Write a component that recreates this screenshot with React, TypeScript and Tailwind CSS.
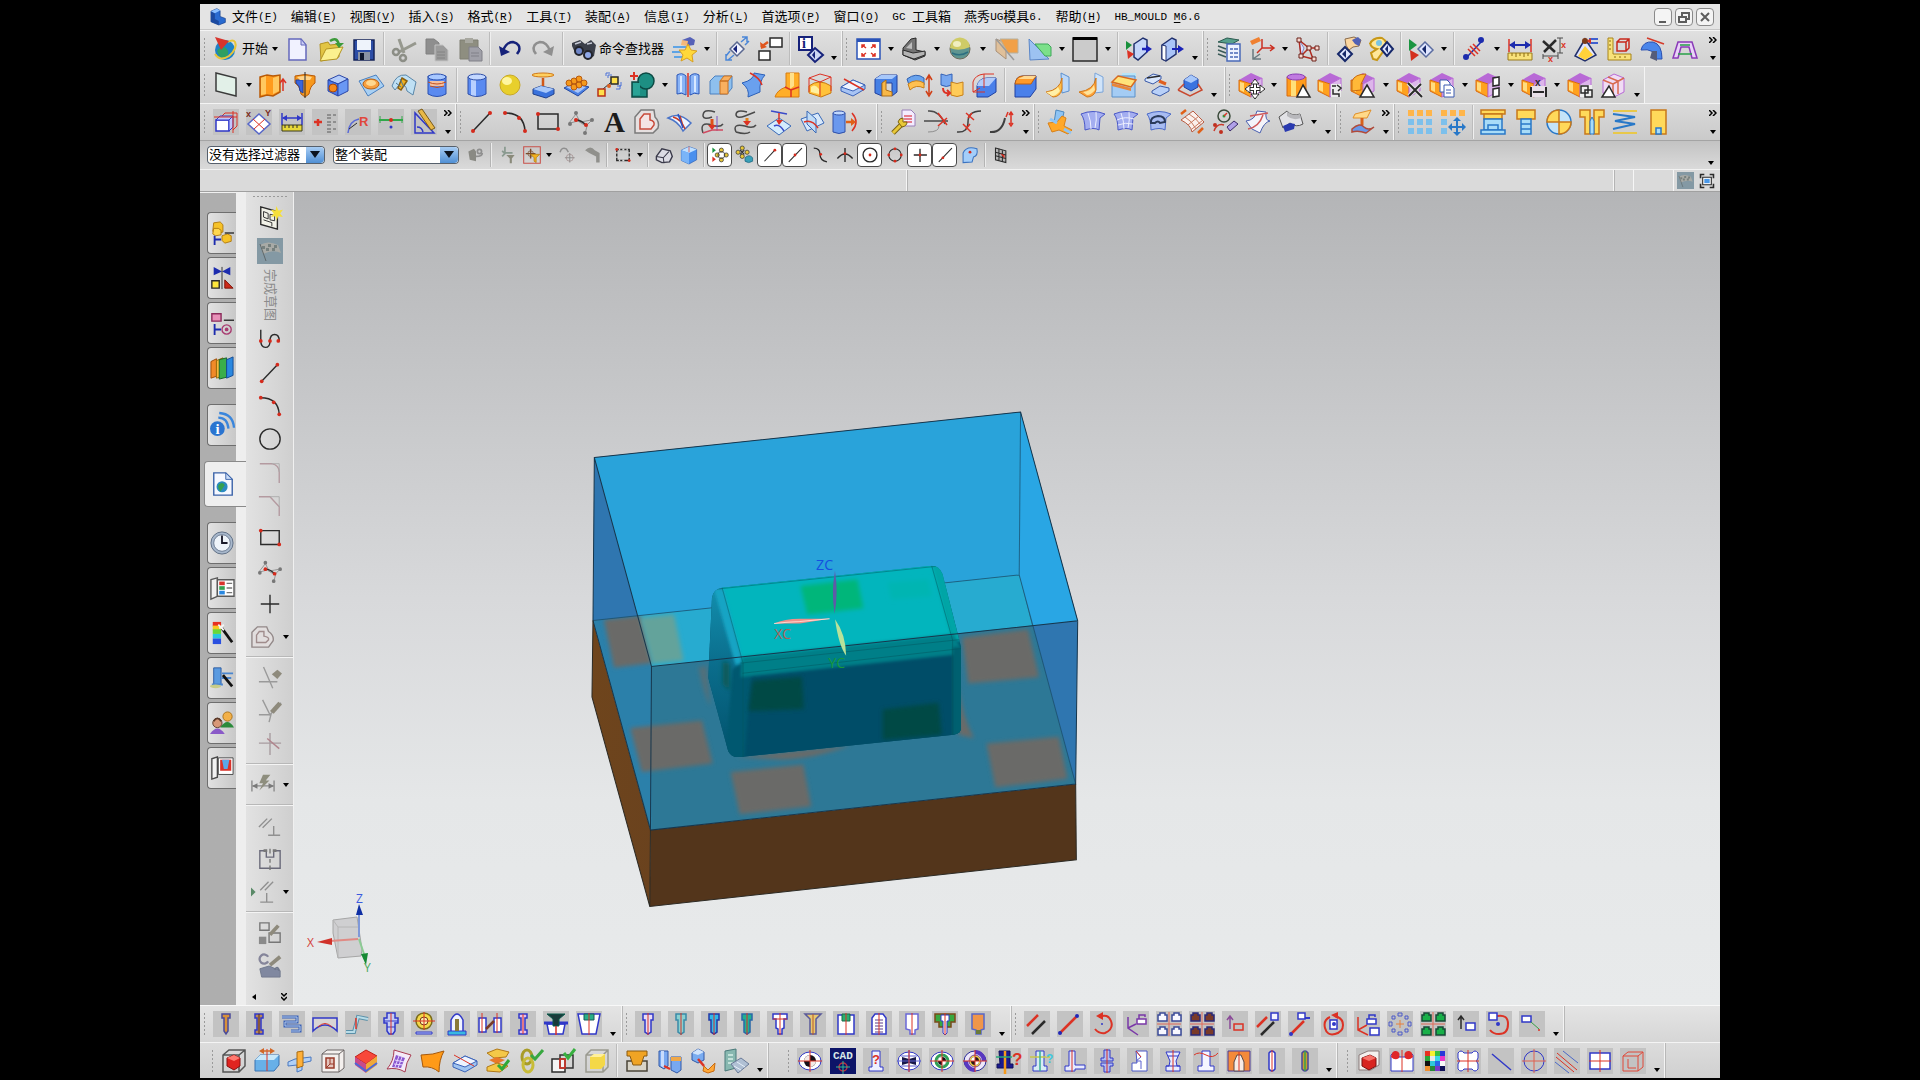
import { Fragment, useState } from 'react';
import clsx from 'clsx';

interface Shape {
    d?: string;
    t?: string;
    x?: number;
    y?: number;
    size?: number;
    font?: string;
    fill?: string;
    stroke?: string;
    w?: number;
}

// shape helpers, every icon is drawn on a 26x26 grid
const f = (d: string, fill: string, stroke = 'none', w = 1): Shape => ({ d, fill, stroke, w });
const s = (d: string, stroke: string, w = 1.5): Shape => ({ d, fill: 'none', stroke, w });
const t = (text: string, x: number, y: number, size: number, fill: string, font = 'Liberation Sans'): Shape => ({ t: text, x, y, size, fill, font });
const c = (x: number, y: number, r: number) => `M${x - r} ${y}a${r} ${r} 0 1 0 ${2 * r} 0a${r} ${r} 0 1 0 ${-2 * r} 0z`;
const e = (x: number, y: number, rx: number, ry: number) => `M${x - rx} ${y}a${rx} ${ry} 0 1 0 ${2 * rx} 0a${rx} ${ry} 0 1 0 ${-2 * rx} 0z`;
const r = (x: number, y: number, w: number, h: number) => `M${x} ${y}h${w}v${h}h${-w}z`;

const K = '#2a2a2a';
const G = '#8f8f8f';
const B = '#3038c8';
const R = '#dc3224';
const W = '#ffffff';
const OR = '#f59a1c';

const dot = (x: number, y: number, color = '#d42a1c') => f(c(x, y, 2), color);
const cube = (top: string, left: string, right: string, line = '#44506a'): Shape[] => [
    f('M3 8L14 3 23 7 13 12z', top, line),
    f('M3 8L13 12V24L3 19z', left, line),
    f('M13 12L23 7V19L13 24z', right, line),
];
const sync: Shape[] = [
    f('M1 8L13 1 24 6 13 12z', '#b869d6'),
    f('M1 8L13 12V25L1 19z', '#ffa21e', '#d86a10'),
    f('M2 10l4 1v9l-4-2z', '#ffdc80'),
    f('M13 12L24 6V19L13 25z', '#dcb6ea', '#b869d6'),
];
const bolt = (fill: string, line = B): Shape[] => [f('M8 3h10v6h-2v12l-3 2-3-2V9H8z', fill, line, 1.5), s('M13 2v22', R, 1)];
const lock = (x: number, y: number, color: string): Shape[] => [s(`M${x + 2} ${y + 5}v-4h6v2`, color), f(r(x, y + 5, 9, 5), W, color, 1.5)];
const quad = (fill: string, line: string): Shape[] => [
    f('M2 10V4h2V2h5v2h2v6zM16 10V4h2V2h5v2h2v6zM2 24v-6h2v-2h5v2h2v6zM16 24v-6h2v-2h5v2h2v6z', fill, line, 1.5),
    s('M13 1v24M1 13h24', '#e06a58', 1),
];

const icons: Record<string, Shape[]> = {
    app: [f('M3 5l9-4 5 3v9l8 3v6l-10 4-12-5z', '#2a6bd0', '#123a86'), f('M3 5l6 3v9l6 3v6L3 21z', '#1c4aa0'), f('M3 5l9-4 5 3-8 4z', '#8cc0ff')],
    start: [f(c(12, 14, 10), '#1d82c8'), f('M4 15q4-6 9-3q5 5-1 11q-6-1-8-8z', '#2f9f62'), s('M2 18q5 8 14 2q9-8 6-14q-2-3-7 0', '#e8c53a', 2), f('M2 1l14 4-8 9z', '#d8342c')],
    new: [f('M4 3h12l5 6v15H4z', '#f1f2ff', '#6468bc', 1.5), f('M16 3v6h5z', '#c9cdf5', '#6468bc')],
    open: [f('M2 8l8-2 2 3 9-1v13L3 25z', '#e2c544', '#b39322'), f('M2 25l6-12 17-2-6 12z', '#fbf08e', '#b39322'), s('M12 5q7-5 9 4', '#3c9a3a', 2.5), f('M17 7h9l-5 5z', '#3c9a3a')],
    save: [f(r(3, 4, 20, 20), '#2c4da6', '#16255a', 1.5), f(r(6, 4, 14, 10), '#eef3fb'), f(r(7, 16, 12, 8), '#8a93a4'), f(r(9, 17, 4, 7), '#10182e')],
    cut: [s('M8 3l5 14M25 7L8 16', '#96988e', 3), s(c(5, 16, 3), '#8c8e86', 2.5), s(c(12, 22, 3), '#8c8e86', 2.5)],
    copy: [f('M2 3h8l5 4v11H2z', '#8e8e8e', '#808080'), f('M11 9h8l5 5v11H11z', '#9b9b9b', '#c4c4c4'), s('M13 16h8M13 19h8M13 22h8', '#828282', 1)],
    paste: [f(r(3, 4, 18, 19), '#8e8e80', '#7e7e72'), f(r(8, 2, 8, 5), '#a8a8a0'), f('M12 11h9l4 4v10H12z', '#a0a0a8', '#808088'), s('M14 17h8M14 20h8', '#808088', 1)],
    undo: [s('M6 15q3-9 10-9q8 2 6 9l-2 3', '#16227a', 2.5), f('M2 10l2 10 9-4z', '#16227a')],
    redo: [s('M20 15q-3-9-10-9q-8 2-6 9l2 3', G, 2.5), f('M24 10l-2 10-9-4z', G)],
    finder: [f('M2 7l8-3 5 4 6-4 5 5-2 11-7 4-3-9-4 3q-5 0-8-8z', '#3b3f4a'), f(c(9, 15, 4), '#6f86c8', '#22242c', 2), f(c(18, 19, 4), '#8fa8e8', '#22242c', 2), s('M5 8l6-2M17 8l5-1', '#c8ccd8')],
    wizard: [f('M11 4l8-3 5 3-1 5-7 1z', '#5561b8'), f('M11 4l6 1-1 5-6-1z', '#f5b87a'), s('M2 11h13M1 16h10M3 21h8', '#5fa4e4', 2), f('M17 8l3 6 6 1-5 4 1 7-6-4-6 3 2-6-4-5 6 0z', '#ffd83a', '#d8a020')],
    updown: [s('M17 6l6-5M18 1h5v5M21 9l4-4M2 18v6h6M6 15l-4 5M4 24l6-5', '#4a86d8', 1.5), f('M6 13l7-7 7 7-7 7z', '#f2f4ff', '#5a6890', 1.5), f('M9 13l4-4v8z', '#16227a')],
    assem: [f(r(13, 2, 12, 9), W, K, 1.5), f(r(2, 15, 11, 9), W, K, 1.5), s('M4 11l7-5', '#e0561e', 2.5), f('M3 6l1 7 6-2z', '#e0561e')],
    info: [f(r(2, 1, 13, 13), W, '#16227a', 2), t('i', 5, 12, 14, '#16227a', 'Liberation Serif'), f('M11 19l7-7 8 7-8 7z', '#cdd6f4', '#16227a', 2), f('M15 19l3-4v8z', '#16227a')],
    fit: [f(r(2, 3, 23, 20), W, '#2a53b8', 1.5), f(r(2, 3, 23, 3), '#2a53b8'), s('M11 12L7 9M7 12V9h3M16 12l4-3M20 12V9h-3M11 17l-4 3M7 17v3h3M16 17l4 3M20 17v3h-3', R, 1.5)],
    shade: [f('M2 12l8-9 5-1v12l9 2v4l-10 4-12-5z', '#737373', K), f('M2 14l10 3 12-2v4l-11 4-11-4z', '#b4b4b4', K), f('M5 12l6-6v7z', '#bdbdbd')],
    sphere2: [f(c(13, 13, 10), '#5f9590', '#6a6a5a'), f('M3 12a10 10 0 0 1 20-1q-11 5-20 1z', '#cfcb66'), f(e(10, 8, 4, 3), '#f1efc0'), s('M5 17q8 4 16-1', '#2d6f80')],
    clipA: [f('M3 3l10 4v16L3 15z', '#e0c09a', '#a89078'), f('M7 3h18v14H15z', '#f2a046', '#b4b0a0'), s('M3 3l18 21', '#9a9a9a')],
    clipB: [f('M3 3l20 20-19 1z', '#9dc2f2', '#5a86c8'), f('M9 8h13l3 3v9h-6z', '#7ce08a', '#3fa85a')],
    blank: [f(r(1, 2, 24, 23), '#cbcbcb', K, 1.5), f(r(1, 1, 24, 3), '#000')],
    sectA: [f('M9 8l9-6 4 2v12l-9 8-4-3z', '#c5d6fa', '#20306e', 1.5), f('M1 5l6 4-6 5z', '#18903c'), f('M2 14l7 4-6 5z', R), s('M17 13h6', '#1a22b8', 2.5), f('M21 9l6 4-6 4z', '#1a22b8')],
    sectB: [f('M4 9l10-7 4 2v14L8 25l-4-2z', '#aac4f8', '#20306e', 1.5), f('M4 9l4 1v15l-4-2z', W, '#20306e'), s('M14 13h8', '#1a22b8', 2), f('M20 9l6 4-6 4z', '#1a22b8')],
    layers: [f('M2 6l9-4 12 2-7 4z', '#57a08c', '#2c5a50'), s('M2 10l8 3M2 14l8 3M2 18l8 3', '#3a5a58', 1.5), f(r(11, 8, 13, 17), '#eef3ff', '#4a6ab8', 1.5), s('M14 13h3M18 13h4M14 17h3M18 17h4M14 21h3M18 21h4', '#4a6ab8')],
    csys: [f('M1 5l9-4 2 4-9 4z', '#f08030'), s('M13 3v9h11M13 12l-5 5M21 9l4 3-4 3', '#cc3022', 1.5), s('M4 13v10h8M4 23l7-5', '#6a7a80', 1.5)],
    drag: [f('M4 4l5 8-3 8z', '#dfe4ff', '#8088c8'), s('M4 4l10 8 8 0M4 4l2 16 12 3M14 12l4 11M6 20l8-8', '#b02a20', 1.5), f(r(2, 2, 4, 4) + r(4, 18, 4, 4) + r(12, 10, 4, 4) + r(20, 10, 4, 4) + r(17, 21, 4, 4), '#f8d8d0', '#6a2018')],
    handA: [f('M10 3l9-2 7 3-2 6-6 1-4 3q-4-4-4-11z', '#fbd6a0', '#8a6a4a'), f('M17 4l6-3 3 3-2 6-4-2z', '#5261b4'), f('M3 18l7-7 7 7-7 7z', '#dfe6ff', '#16286a', 2), f('M7 18l4-4v8z', '#16286a')],
    handB: [f('M2 8q3-7 12-6q7 4 3 11l-8 11-4-1-2-6 6-4q-6-1-7-6z', '#ffe89a', '#c89818', 2), f(c(11, 7, 3), '#7ac4e4'), f('M13 13l6-7 6 7-6 7z', '#dfe6ff', '#16286a', 2), f('M17 13l3-4v8z', '#16286a')],
    show: [f('M1 3l8 6-8 6z', '#1a9440'), f('M2 14l9 5-8 6z', '#d4301e'), f('M10 13l7-7 8 8-7 7z', '#dfe6ff', '#5a6ca0', 1.5), f('M14 13l4-4v9z', '#16286a')],
    measure: [s('M6 21L21 5', '#1c2cae', 1.5), s('M9 10l8 8M7 13l7 7M12 8l7 7', R, 1.5), f(c(5, 21, 3) + c(20, 4, 3), '#1c2cae')],
    ruler: [f(r(1, 17, 24, 7), '#f8e27a', '#9a7a18'), s('M5 17v3M9 17v4M13 17v3M17 17v4M21 17v3', '#8a6a10', 1), s('M2 3v13M24 3v13', R, 1.5), s('M3 9h20', '#1c2cae', 2), f('M2 9l6-4v8zM24 9l-6-4v8z', '#1c2cae')],
    dimX: [s('M3 5l12 11M16 4L4 16', K, 2.5), s('M20 2v15M17 2h6M17 17h6M3 20h15M3 18v5M18 18v5', '#4a4a4a', 1), t('x', 21, 12, 9, R), t('x', 8, 26, 9, R)],
    cone: [f('M12 3L2 20l10 5 11-6z', '#e0e4ff', '#22306a', 1.5), f('M12 10l-7 10 7 4 8-5z', '#ffd23a'), f(c(12, 5, 3), '#7a3a1a'), s('M16 3h9M16 7h9', '#4060d0', 2), f('M14 5l4-3v6z', R)],
    cubeRule: [f('M2 2h5v16h18v6H2z', '#f8e27a', '#a88418'), s('M5 5H3M5 9H3M5 13H3M9 22v-2M14 22v-2M19 22v-2', '#8a6a10', 1), s('M11 6h9v9h-9zM11 6l3-3h9v9l-3 3M20 6l3-3', '#c8281c', 1.5)],
    curve: [f('M2 14q2-9 12-8q9 2 9 17h-6q-1-11-15-9z', '#4a86ea', '#2a50b0'), f('M13 15h5v10l-7-3z', '#555c78'), s('M8 2l17 6', '#d43a2a', 1.5)],
    trap: [f('M6 6h14l5 16h-5l-3-11h-8L6 22H1z', '#ead2f8', '#8a3ab8', 1.5), s('M8 9h10M6 18h14', '#28a048', 1.5)],

    datum: [f('M3 1l20 5v18l-20-5z', '#e2f0e8', '#3a3a3a', 1.5)],
    extrude: [f('M1 5l7-2 6 1 7-1v17l-7 4-6-1-7 2z', '#ff9a1c', '#b85a08', 1.5), f('M2 6l5-2v18l-5 1zM14 6l6-2v15l-6 3z', '#ffc860'), s('M24 19V8M21 11l3-4 3 4', R, 1.5)],
    revolve: [f('M3 4q10-3 20 0v7q-5 3-6 11l-4 3-4-3q-1-8-6-11z', '#f7981c', '#b85a08'), f('M4 8h7v13l-3-2q0-5-4-8z', '#3a66dc', '#2040a0'), f('M5 5q8-2 15 0l-2 3H8z', '#ffd48a'), s('M13 0v26', K, 1)],
    hole: [...cube('#b4ccfa', '#4a78e8', '#6a98f4', '#2a46a8'), f(c(8, 16, 4), '#f58a1c', '#a84808')],
    emboss: [f('M1 9l17-6 8 11-16 10z', '#a8d0f4', '#4a80c0'), f(e(13, 12, 8, 5), '#f8a040', '#b86010'), f(e(13, 11, 5, 3), '#ffd890')],
    rib: [f('M1 14q4-12 14-11l10 7-3 13-6-4q-1-8-8-6l-4 5z', '#bfe0f4', '#5a86a8'), f('M11 6l5 3-6 9-3-2z', '#f0b020', '#8a6010', 1.5), s('M5 11l5 4M9 7l4 8', '#4a7aa0', 1)],
    thread: [f('M4 4h18v18q-9 5-18 0z', '#5a8af0', '#2a50b0'), f(e(13, 5, 9, 3), '#a8c8ff', '#2a50b0'), f('M6 9h14v5H6z', '#f4c0a0'), s('M4 10q9 4 18 0M6 14q7 3 14 0', '#c05020', 1)],
    cylinder: [f('M4 5h18v17q-9 5-18 0z', '#5a8af0', '#3050a8'), f('M7 7h5v17l-5-1z', '#b8d0ff'), f(e(13, 5, 9, 3), '#c4d8ff', '#3050a8')],
    sphere: [f(c(13, 13, 10), '#e8cf2c', '#c8a828'), f(e(10, 9, 5, 4), '#fff6a0')],
    boss: [f('M3 17l8-3 13 3v5l-8 4-13-4z', '#3a72dc', '#20408c'), f('M3 17l8-3 13 3-8 4z', '#a8c8fa'), f(e(13, 3, 11, 2), '#ffd060', '#d07818'), s('M13 6v8', '#d05818', 2.5)],
    pattern: [f('M1 16l10-5 15 4-11 9z', '#4a80e4', '#2448a0'), f('M3 15l9-3 11 3-8 6z', '#a8c4f8'), f(c(6, 11, 3) + c(11, 9, 3) + c(16, 7, 3) + c(11, 15, 3) + c(16, 13, 3) + c(21, 11, 3), OR, '#b85a10')],
    instance: [s('M7 17l12-10', K, 1), f(r(2, 17, 7, 7), '#ffe04a', '#b83018', 1.5), f(r(15, 5, 7, 7), '#ffe04a', K, 1.5), f(c(13, 14, 2), '#e06020'), s('M10 4V1h4M12 6V3h4M25 10v4h-4M24 13v4h-4', '#4a70d8', 1)],
    unite: [f(r(3, 10, 15, 15), '#1d8f83', '#0c4a44', 1.5), f(c(17, 9, 8), '#1d8f83', '#0c4a44', 1.5), f('M4 11h7v12H4z', '#2aa396'), s('M5 0v8M1 4h8', R, 2)],
    split: [f('M2 3q5-3 9 1v19q-4-3-9-1zM24 3q-5-3-9 1v19q4-3 9-1z', '#8ab4f6', '#2a56b8'), s('M13 1v24', R, 1.5), s('M6 4v16M20 4v16', '#d8e8ff', 2)],
    trimBody: [f('M2 9l5-5h17v12l-5 6H2z', '#8ec0ee', '#4a80c0'), f('M12 9h8v13h-8zM12 9l4-5h8l-4 5z', '#f8b060', '#c87020')],
    swept: [f('M1 11q12-3 12-10l11 2q-6 6-5 17l-12 5q2-8-6-14z', '#6aa0ee', '#2c60b8'), s('M9 1q10 5 12 12', R, 1.5)],
    cornerO: [f('M12 1h13v24H1q2-7 11-10z', '#ffae28', '#d87c10'), f('M16 1h4v13l-4 3z', '#ffe08a'), s('M11 15l6 3 8-3M17 18v7', R, 1.5)],
    shell: [f('M2 14q10-8 22 0v7l-10 4-12-4z', '#ffc23a', '#c87810'), f('M4 15q4-4 8 2v5l-8-2z', '#fff0a0'), s('M2 6l11-4 11 3v14M2 6v14M2 6l11 4 11-5M13 10v14', R, 1)],
    slab: [f('M1 15l12-7 12 5v4l-12 7-12-5z', '#a8c4f4', '#3a62b8'), f('M1 15l12-7 12 5-12 6z', '#eef4ff', '#3a62b8'), s('M4 7l20 11', R, 1.5)],
    groove: [f('M2 7l6-4h16v17l-5 4V11H9v13l-7-3z', '#4680e4', '#2040a0'), f('M9 11l4-3v10l6 2v4l-10 0z', '#f8b848', '#b07018'), f('M2 7l6-4h16l-5 4z', '#a8c8fa')],
    bend: [f('M1 7q9-7 17-1v7q-8-5-14 3z', '#6aa4ee', '#3060b0'), f('M2 12q8-6 16-1v5q-8-4-14 2z', '#ffc050', '#c88018'), s('M23 4v18M20 8l3-5 3 5M20 19l3 5 3-5', '#d04018', 1.5)],
    wrap: [f('M2 2q5 3 11 0v11q-6 3-11 0z', '#78a8f0', '#3060b8'), f('M12 10q6 3 12 0v13q-6 3-12 0z', '#ffcb58', '#c88018'), s('M4 16q0 6 6 5M8 18l3 3-3 3', R, 2)],
    sheetR: [f('M5 14q2-8 10-8h9v14l-8 5H5z', '#4a80ea', '#2040a0'), f('M5 14q2-8 10-8h9l-7 8z', '#b4ccfa'), s('M1 20V10Q3 3 12 2h10M1 20l7-4M1 20h12M12 2v14', R, 1)],
    blend: [f('M3 12q1-8 8-8h13v13l-6 8H3z', '#4a80ea', '#2040a0'), f('M3 12q1-8 8-8h13l-5 8z', '#ff9a28', '#c06010'), f('M6 7l6-3h12l-3 3z', '#ffd890')],
    edgeA: [f('M16 1l8 4v14l-7 2z', '#bcd8f8', '#5a90d0'), f('M1 20q14-2 16-14v11q-2 8-9 8z', '#ffc04a', '#d07818'), f('M1 20q8 0 12-5l2 4q-4 5-8 5z', '#fff0a8')],
    edgeB: [f('M17 1l8 4v15l-9 1z', '#d0e4fa', '#7aa4d8'), f('M1 20q15-2 17-14v12q-2 7-9 7z', '#ffa23a', '#d07818'), f('M5 20q8-1 11-7l1 5q-4 5-8 5z', '#ffe49a')],
    chamfer: [f('M11 1h14v8H11z', '#b8e4f8'), f('M1 11l6-7h17v21H1z', '#a4ccf4', '#5a90c8'), f('M1 10l6-6 18 4-5 7z', '#ffe27a', '#d86a20', 1.5), f('M1 11l19 5v3L1 14z', '#e8863a')],
    offsetF: [f('M1 7l8-5 8 2v3l-8 5-8-3z', '#d8e6fc', '#3a5aa8', 1), f('M8 19l8-5 9 2v3l-9 5-8-3z', '#b8d0f8', '#3a5aa8', 1), s('M3 6l13-2', K), s('M15 9l7 3', '#e06020', 3)],
    draft: [f('M7 8l7-5 7 4v8l-7 4-7-4z', '#3a74e0', '#2040a0'), f('M7 8l7-5 7 4-7 4z', '#a8c8fa'), s('M1 18l12 6 12-6-4-6M1 18l6-6', '#c84a30', 1.5)],

    sMove: [...sync, s('M17 9v16M9 17h16', W, 6), s('M17 10v14M10 17h14', K, 4), s('M17 11v12M11 17h12', W, 2), f('M17 7l4 5h-8zM17 27l4-5h-8zM7 17l5-4v8zM27 17l-5-4v8z', W, K)],
    sCyl: [f('M3 5h19v19H3z', '#ff9c1c', '#d86a10'), f('M7 6h5v18H7z', '#ffdf7a'), f(e(12, 5, 9, 3), '#c07ae0', '#8a3ab8'), f('M19 13l7 12H13z', W, K, 1.5)],
    sReplace: [...sync, f('M14 12h10v13H14z', '#ececec'), s('M15 14h4M20 13l4 3-3 3M16 17v5h6v3', K, 1.5)],
    sRound: [...sync, f('M2 9q3-7 14-7l-5 10v6l-9 1z', '#ffb838', '#c86a10'), f('M17 13l7 12H10z', W, K, 1.5)],
    sDelete: [...sync, s('M12 11l14 14M25 12L13 24', '#e4e4e4', 4), s('M12 11l14 14M25 12L13 24', K, 2)],
    sCopy: [...sync, f('M11 8h7l3 3v9H11z', W, '#3a5ab0'), f('M15 13h7l3 3v9H15z', W, '#3a5ab0'), s('M17 18h5M17 21h5', '#3a5ab0', 1)],
    sCopl: [...sync, f('M18 6l6-1v8l-6 1zM18 17l6-1v8l-6 1z', W, K, 1.5)],
    sDim: [...sync, f(r(10, 14, 15, 11), '#e8e0e8'), s('M10 15v10M25 15v10M12 20h11', K, 2), t('x', 14, 14, 10, K)],
    sShell: [...sync, f(r(13, 13, 12, 12), '#f0f0f0'), s('M14 14h7v7h-7zM18 18h7v7h-7z', K, 1.5)],
    sEdit: [f('M3 8L14 2 24 6V20L14 25 3 21z', '#f0dcf4', '#b869d6'), s('M3 8l10 4v12M13 12l11-6M8 5l10 4v13', '#d86a50', 1.5), f('M9 14l6 11H2z', W, K, 1.5)],

    box3: [s('M8 8l4-4h12v13l-4 4', R, 1), f(r(3, 11, 13, 11), W, B, 1.5), f('M3 11l4-4h13l-4 4zM16 11l4-4v11l-4 4z', '#c0c8ff', B), s('M20 2v22M1 8h23', R, 1)],
    plane3: [f('M13 5l11 10-11 10L2 15z', W, '#5868c8', 1.5), s('M7 10l11 10M19 10L8 20', R, 1), t('x', 0, 8, 9, '#7a2a20'), t('Y', 19, 7, 9, '#7a2a20')],
    meas3: [s('M3 4v12M23 4v12M4 9h18', B, 1.5), f('M3 9l5-3v6zM23 9l-5-3v6z', B), f(r(3, 16, 20, 6), '#e8d838', '#3a3a1a'), s('M6 16v3M10 16v3M14 16v3M18 16v3', K, 1)],
    list3: [s('M6 10v7M2 13h8', R, 2.5), s('M15 6h4M15 9h4M21 6h3M15 13h4M15 16h4M21 13h3M15 20h4M15 23h4M21 20h3', '#5a5a5a', 1)],
    radius: [s('M3 24q1-12 11-14', '#5a6ad8', 1.5), s('M12 14L4 20', K, 1), t('R', 14, 17, 13, '#e0483c')],
    level: [s('M1 11h24', '#30a848', 2), s('M2 7v7M24 7v7', '#30a848', 1), dot(13, 11), f(c(13, 18, 1.5), B)],
    angle: [s('M4 24V4l19 20z', B, 1.5), f('M7 2l4-2 13 19-4 2z', '#e8b848', '#7a5a18'), s('M6 18q5 0 6 5', B)],
    line: [s('M4 22L21 4', K), dot(4, 22), dot(21, 4)],
    arc: [s('M3 4q19 0 20 18', K), dot(3, 4), dot(17, 9), dot(23, 22)],
    rect: [s(r(3, 5, 20, 15), K), dot(3, 5), dot(23, 20)],
    spline: [s('M1 14l7-9 4 8 6-1 5-1M2 14l8-2 8 5 6-6M17 25l2-8', G, 1), s('M8 11q5 0 10 5', K), dot(8, 11), dot(18, 16), f(c(8, 4, 2) + c(2, 15, 2) + c(24, 11, 2) + c(17, 24, 2), '#777')],
    text: [t('A', 3, 23, 29, '#1c1c1c', 'Liberation Serif')],
    offset: [f('M1 24V8l6-7h13l1 7q5 5 3 11l-5 5z', '#e6e0e0', '#7a7a7a', 1.5), f('M6 20V10l4-5h6v6q5 1 4 5l-3 4z', '#f4e4e4', '#c84a3a', 1.5)],
    faceCurve: [f('M1 9q11-7 23 5l-8 8Q11 12 1 9z', '#eef4ff', '#4a74c8', 1.5), s('M6 8q8 2 12 12M13 7l3 10', '#cc3a20', 1.5), s('M11 5l5 14', '#2a50c0', 1.5)],
    bridge: [s('M15 3q-12-4-12 4q1 4 9 1M3 24q-4-12 9-8q8 3 11-1', '#4a4a4a', 1.5), s('M17 7v15', '#7a50c0', 1), s('M12 10v6', '#e05018', 3), f('M8 16h8l-4 5z', R), s('M3 24l9-3 11 0', '#d04a60', 1.5)],
    bridge2: [s('M14 3q-11-3-11 3q1 4 9 1l10-4M3 23q-4-9 9-6q8 3 11-1M3 23q10 3 14 0', '#4a4a4a', 1.5), s('M14 9v5', '#e08018', 3), f('M10 12h8l-4 5z', R)],
    project: [f('M1 17l12-8 12 8-12 9z', '#d4ecfc', '#3a6ab8', 1), s('M5 2l16 3M8 17q5-3 10 5', '#3a4ac8', 1.5), s('M13 4v9', R, 1.5), f('M10 11h7l-4 5z', R)],
    intersect: [f('M2 10l17-6 6 10-17 8z', '#d8e8fa', '#3a6ab8', 1), f('M8 2l9 8v14l-9-9z', '#c0dcf6', '#3a6ab8', 1), s('M5 13q8-3 14 6', R, 1.5)],
    combine: [f('M1 4h12v19q-6 3-12 0z', '#6a98ee', '#3050a8'), f(e(7, 4, 6, 2), '#c0d8ff', '#3050a8'), s('M20 4q8 9 0 18', R, 1.5), s('M14 13h6', '#e06018', 2.5), f('M19 9l5 4-5 4z', '#e06018')],
    wrench: [f('M12 1h9l4 4v12H12z', '#f4ecff', '#9a80b8'), s('M14 7h8M14 10h8M14 13h8', '#e05a6a'), s('M3 24l9-9', '#7a6210', 5), s('M3 24l9-9', '#e8c838', 3), f('M8 13q1-4 5-4v4h4q0 4-5 5z', '#e8c838', '#7a6210')],
    trimC: [s('M1 12h24M5 2q11-1 17 13', '#4a4a4a', 1.5), s('M15 4l9 12M24 9l-9 8', R, 1.5), s('M5 23q11 0 11-6', G, 1)],
    divide: [s('M1 23q11 1 11-10T25 2', '#3f3f3f', 1.5), s('M10 4l8 7M7 15l8 8M16 4l-4 5M14 15l-4 5', R, 1.5)],
    length: [s('M1 23q12 1 15-14', '#3f3f3f', 2), s('M17 8l2-5M22 15V4M20 6l2-3 2 3M20 14l2 3 2-3', R, 1.5)],
    ruled: [f('M9 1l8 2-3 13-7-2z', '#8ec4f4', '#4a88c0'), f('M1 14l9-1 5-6 4 2-2 8 8 4-4 4-9-4-7 2z', '#ffa828', '#d88018'), s('M3 10l7 4M17 20l7 4', '#8ec4f4', 3)],
    mesh1: [f('M1 5q12-5 24 0l-5 4-1 12q-5-3-14 0 0-11-4-16z', '#a4aef0', '#4a58c8'), s('M8 4q3 8 3 16M16 3q1 8-1 16', '#eef0ff', 1)],
    mesh2: [f('M1 5q12-5 24 0l-5 4-1 12q-5-3-14 0 0-11-4-16z', '#a4aef0', '#4a58c8'), s('M8 4q3 8 3 16M16 3q1 8-1 16M4 11q8-4 17-1M5 16q7-3 15-1', '#eef0ff', 1)],
    mesh3: [f('M1 5q12-5 24 0l-5 4-1 12q-5-3-14 0 0-11-4-16z', '#a8bcf2', '#4a6ac8'), s('M5 14q-1-6 7-7 7 0 7 6l-5 1q-2-3-5 0z', '#2a3a5a', 2)],
    mesh4: [f('M2 11l12-9 11 11-12 10q-1-7-11-12z', '#faf0ec', '#b85a40'), s('M6 8q7 4 11 12M10 5q7 4 12 11M9 16l11-9M13 20l11-9', '#c87a60', 1), s('M2 5l5-4M19 24l5-5', '#e06018', 2.5)],
    studio: [s(c(12, 7, 6), '#3a4a3a', 1.5), f(c(12, 7, 1.5), '#28a040'), s('M12 7l3-3', R), s('M2 22q3-8 10-6', '#cc3a2a', 1.5), f('M15 18l7-6 4 3-8 7z', '#b0a0e8', '#3a2a6a'), f(c(3, 16, 2) + c(9, 23, 2), '#c03020')],
    trimS: [f('M1 12q9-1 11-10l9 1q-1 9 4 9-6 1-10 12l-8-4z', '#f4f4fa', '#4a60b0'), s('M3 20q11-2 15-14M5 7l18-3', '#d05a5a', 1.5)],
    surf: [f('M1 8l8-6q5 6 13 3l3 10q-7 4-13-1l-7 5z', '#e2e2e6', '#555'), f('M9 2q5 6 13 3l1 4q-8 3-14-2z', '#b8b8bc'), f('M5 17l7-3 5 1-1 5-9 3z', '#2a3ab0')],
    morph: [f('M6 5l16-4-4 8-14 0z', '#ffd98a', '#e0902a'), s('M13 9v7', '#d8601a', 3), f('M3 20q8-7 12-2 4 4 10 0l-8 6q-8-3-14-1z', '#6a98e8', '#b04a3a', 1.5)],
    grid: [f(r(1, 1, 6, 6) + r(10, 1, 6, 6) + r(19, 1, 6, 6), '#ffb54a'), f(r(1, 10, 6, 6) + r(10, 10, 6, 6) + r(19, 10, 6, 6) + r(1, 19, 6, 6) + r(10, 19, 6, 6) + r(19, 19, 6, 6), '#7cc0ec')],
    gridMove: [f(r(1, 1, 6, 6) + r(10, 1, 6, 6) + r(19, 1, 6, 6), '#ffb54a'), f(r(1, 10, 6, 6) + r(1, 19, 6, 6), '#7cc0ec'), s('M17 11v14M10 18h14', '#2878c8', 2), f('M17 8l4 4h-8zM17 27l4-4h-8zM8 18l4-4v8zM26 18l-4-4v8z', '#2878c8')],
    mold1: [f('M1 1h24v4H1z', '#ffd95a', '#c8781a', 1.5), f(r(4, 5, 18, 5), '#ffd95a', '#c8781a', 1.5), f(r(4, 10, 18, 11), '#a8dcf8', '#2878c8', 1.5), f(r(1, 21, 24, 4), '#a8dcf8', '#2878c8', 1.5), s('M8 21v-5h10v5', '#2878c8')],
    mold2: [f('M4 1h18v9H4z', '#ffd95a', '#c8781a', 1.5), f('M8 10h10v15H8z', '#a8dcf8', '#2878c8', 1.5), s('M8 15h10M8 20h10', '#2878c8')],
    mold3: [f(c(13, 13, 12), '#c4e4f8', '#2878c8', 1.5), f('M13 1v12H1A12 12 0 0 1 13 1zM13 25V13h12a12 12 0 0 1-12 12z', '#ffd95a', '#c8781a', 1.5)],
    mold4: [f('M1 1h10v24H6V8H1z', '#ffd95a', '#c8781a', 1.5), f('M25 1H15v24h5V8h5z', '#ffd95a', '#c8781a', 1.5), f('M11 12l2-4 2 4v13h-4z', '#a8dcf8', '#2878c8')],
    mold5: [f(r(1, 1, 24, 2), '#e8c84a'), f(r(1, 23, 24, 2), '#e8c84a'), s('M1 5l22 3L3 12l20 3L1 20', '#2878c8', 2)],
    mold6: [f('M6 1h15v24H6z', '#ffd95a', '#c8781a', 1.5), f('M11 25v-6h5v6z', '#a8dcf8', '#2878c8', 1.5)],

    fInt: [f('M2 8l8-4 3 4v14l-9-2z', '#8a8a84'), s(c(18, 8, 3), G, 2.5), s('M13 15q9 0 9-5', G, 2.5)],
    fBack: [s('M10 1v9h11M6 7l4 4-4 4', '#8a9a90', 2.5), f('M12 13h12l-4 5v7h-3v-7z', '#8a8a7a')],
    fSnap: [s(r(1, 1, 24, 24), '#c8504a', 1.5), s('M11 4v14M4 11h14', '#7a4a2a', 2), s(c(11, 11, 4), '#7a4a2a', 1), f('M11 12h13l-5 5v7l-3-2v-5z', '#f2b01e', '#b07808')],
    fDes: [s('M3 9q2-8 9-5l3 5', G, 2), s('M17 10v14M10 17h14', G, 1.5), s(c(17, 17, 5), '#a08a8a', 1)],
    fHand: [f('M3 6q8-8 14 0l7 4v14h-5v-9L9 10z', '#90908c')],
    fRect: [s(r(4, 5, 18, 16), K, 2), s('M7 5h2M12 5h3M18 5h2M7 21h2M12 21h3M4 9v2M4 15v2M22 9v2M22 15v2', '#d8d8d8', 3), dot(4, 5), dot(22, 21)],
    fHouse: [f('M2 15l8-11 12 3 3 8-4 8-11 1-8-4z', '#dcdce4', '#3a3a4a', 2), s('M2 15l10 2 1 8M12 17l8-9', '#3a3a4a', 1.5)],
    fCube: [f('M2 6l11-5 11 4v15l-11 6L2 21z', '#4a90ee', '#2a60b8'), f('M2 6l11-5 11 4-11 5z', '#c0e0ff'), f('M13 10v16L2 21V6z', '#7ab4f8'), s('M13 1v8', R, 1)],
    fEnds: [f('M2 2l5 4-5 4z', '#1a9440'), f('M2 15l5 4-5 4z', R), f(c(15, 6, 3) + c(15, 20, 3) + c(9, 13, 3) + c(22, 13, 3), '#e8c838', K), s(c(15, 13, 5), K, 1)],
    fNodes: [f(c(9, 3, 3) + c(9, 15, 3) + c(3, 9, 3) + c(16, 9, 3), '#e8c838', K), s('M6 6l6 6M12 6l-6 6', K), f('M13 17q6-6 11 0v5q-6 4-11 0z', '#38a0b8', '#18607a')],
    fEnd: [s('M5 22L20 6', K), dot(20, 6)],
    fMid: [s('M4 23L23 3', K), dot(13, 13)],
    fTan: [s('M4 3q9 0 9 9t10 11', K, 2), dot(14, 12)],
    fInter: [s('M2 18q11-13 22 0M13 3v20', K, 2), dot(13, 11)],
    fCenter: [s(c(13, 13, 10), K, 2), dot(13, 13)],
    fQuad: [s(c(13, 13, 9), K, 1.5), dot(13, 4), dot(13, 22), dot(4, 13), dot(22, 13)],
    fPoint: [s('M13 4v19M4 13h19', K, 2), dot(13, 13)],
    fOn: [s('M4 23L23 3', K), dot(10, 17)],
    fFace: [f('M3 10q5-11 20-6 2 10-5 12l-2 7-13 1z', '#a4cefa', '#3a72c0', 1.5), dot(13, 9)],
    fGrid: [f('M5 3l15 4v17L5 20z', '#b4b4b4', K, 1.5), s('M10 4v17M15 6v17M5 9l15 4M5 14l15 4', K, 1.5), f('M12 11l6 2v5z', R)],
    flag: [f(r(0, 0, 26, 26), '#8499a4'), f('M3 7q8-5 18 0l3 8q-8-4-18 1z', '#a8aaa6'), s('M3 6l6 17', '#5f686a', 1), f('M5 8h3v3H5zM11 6h3v3h-3zM17 7h3v3h-3zM9 10h3v3H9zM15 10h3v3h-3z', '#76807e')],
    window: [s('M1 8V1h7M18 1h7v7M25 18v7h-7M8 25H1v-7', K, 3), f(r(5, 6, 16, 14), W, K, 2), f(r(8, 9, 10, 8), '#4a98e8')],

    assyNav: [f('M4 2l7-1 3 3v8l-8 2-3-3z', '#f6c228', '#b07a10'), f('M13 16l6-2 4 2v6l-7 2-3-3z', '#f6c228', '#b07a10'), f('M4 8l5 0 3 2v5l-6 1-3-2z', '#ffd850', '#b07a10'), s('M5 16v10M5 20h7', '#1c2cae', 2), s('M16 13h10', K)],
    constraint: [f('M4 1v9l9-4zM22 1v9l-9-4z', '#1c2cae'), f(r(2, 16, 8, 8), '#ffe83a', K, 1.5), f('M16 24v-9l9 9z', '#cc2a1a', '#7a1408'), s('M13 1v24', K, 1)],
    partNav: [f('M2 3h10v8H2z', '#e890b8', '#8a2a5a', 1.5), s('M5 14v12M5 20h7', '#1c2cae', 2), s('M15 10h11', K), s(c(18, 20, 5), '#a83a70', 1.5), f(c(18, 20, 2), '#a83a70')],
    library: [f('M1 6l6-3v19l-6 2z', '#f08a28', '#9a4a08'), f('M7 5l7-3v20l-7 2z', '#f8b83a', '#9a6a08'), f('M10 4l8-2v21l-8 2z', '#3aae4a', '#14602a'), f('M18 4l7-3v20l-7 3z', '#2a88e0', '#144a90')],
    webInfo: [f(c(8, 17, 8), '#2a74d0'), t('i', 6, 23, 16, W, 'Liberation Serif'), s('M9 5q10 0 11 12M10 0q15 1 16 16', '#3a86dc', 2.5)],
    browser: [f('M3 1h13l7 7v17H3z', '#f6f8ff', '#3a62a8', 1.5), f('M16 1v7h7z', '#cadcf8', '#3a62a8'), f(c(12, 16, 6), '#2a8ac0'), f('M8 14q4-4 7 0-3 5-5 7-3-4-2-7z', '#34a050')],
    clock: [f(c(13, 13, 12), '#a8b8cc', '#5a6a80'), f(c(13, 13, 9), '#eef4fa', '#6a7a90'), s('M13 5v8h6', '#1a1a2a', 2)],
    roles: [f('M1 4l7-2v20l-7 3z', '#f0f0f0', '#5a5a5a', 1.5), f(r(8, 4, 18, 18), W, '#5a5a5a', 1.5), f(r(10, 6, 6, 4), '#d8342c'), f(r(10, 11, 6, 4), '#34a050'), f(r(10, 16, 6, 4), '#2a88e0'), s('M18 8h6M18 13h6M18 18h6', '#777')],
    rainbow: [f(r(3, 1, 9, 5), '#e83020'), f(r(3, 5, 9, 5), '#f8c820'), f(r(3, 9, 9, 5), '#68d838'), f(r(3, 14, 9, 5), '#28c8e0'), f(r(3, 19, 9, 6), '#2a50e0'), s('M13 8l11 15', '#111', 3), s('M9 4l6 6M15 4l-5 4', '#f4f4f4', 2)],
    wizard2: [f(r(4, 2, 8, 18), '#5a9ae0', '#2a5aa0'), s('M13 8h12M13 13h10M2 20h12', '#4a86d0', 2), s('M14 10l10 12', '#111', 3), f(e(6, 22, 6, 2), '#c8cc88')],
    people: [f(c(19, 6, 5), '#f2b048', '#a87018'), f('M11 18q8-12 15 0z', '#2a8a3a'), f(c(8, 13, 5), '#d89878', '#5a3a2a'), f('M0 25q8-12 16 0z', '#8a5ac8'), s('M4 11q4-6 8 0', '#5a3a2a', 2)],
    gallery: [f('M2 3l6-2v22l-6 2z', '#f2f2f2', '#4a4a4a', 1.5), f(r(9, 2, 16, 18), W, '#444'), f('M11 4h12v12H11z', '#d8342c'), f('M13 4h8l-2 10h-4z', '#5aa8e8')],

    sketch: [f('M3 1l18 5v19L3 20z', '#f2f2e8', K, 1.5), s('M6 6l5 2v6l-5-2zM13 9l5 1v6l-5-1zM6 15l9 3v4', K, 1), f('M20 0l2 5 5-1-3 4 3 4-5-1-2 5-1-5-5 1 3-4-3-4 5 1z', '#f6e03a')],
    profile: [s('M3 2v11q0 8 5 8t5-7q0-7 5-7t5 7', K, 1.5), dot(3, 14), dot(13, 14), dot(22, 14)],
    circle: [s(c(13, 13, 11), K)],
    fillet: [s('M2 4h13q8 2 8 9v12', '#b49aa0', 1.5), s('M15 4h8v9', '#aaa', 1)],
    chamf2: [s('M1 4h12l10 11v10', '#b49aa0', 1.5), s('M13 4h10v11', '#aaa', 1)],
    plus: [s('M13 3v20M3 13h20', K)],
    offGray: [f('M1 24V8l6-6h10l2 5q6 4 5 10l-5 7z', '#e2dede', '#928888', 1.5), s('M6 19v-8l3-4h5v5q6 1 5 4l-3 3z', '#a08c8c', 1.5)],
    qTrim: [s('M6 1l10 23M1 17h20', '#9a9a9a', 1.5), f('M15 9l6-5 5 4-5 6z', '#8e8a7c')],
    qExt: [s('M5 1l8 16 12-13M1 17h13l-2 8', '#9a9a9a', 1.5), f('M13 13l9-10 4 3-9 10z', '#8e8a7c')],
    qCorner: [s('M13 1v24M1 12h24', '#a89ca0', 1.5), s('M10 7l13 11', '#b0848c', 1.5)],
    rapid: [s('M1 8v12M25 8v12M2 14h22', '#8a8a8a', 1.5), f('M1 14l6-3v6zM25 14l-6-3v6z', '#7a7a7a'), f('M13 2h8l-5 6 4 0-11 11 4-8h-4z', '#8e8e7e')],
    geoCon: [s('M1 14l9-9M5 15l10-10M17 13v10M11 23h13', '#909090', 1.5)],
    symm: [s('M9 4H2v19h22V4h-7M9 5v6h8V5', '#6a6a7a', 1.5), s('M13 2v5M13 13v4M13 20v5', '#777', 1.5), s('M6 4l4 0M16 4h4', '#777', 3)],
    autoCon: [f('M0 8l5 5-5 5z', '#5a8a68'), s('M10 11l9-9M15 11l9-9M17 14v10M10 24h14', '#909090', 1.5)],
    attach: [s(r(2, 2, 10, 8), '#777', 1.5), s(r(12, 13, 12, 10), '#777', 1.5), f(r(1, 17, 8, 8), '#8a8a8a'), s('M13 15l9-10', '#8e8a7c', 4)],
    reattach: [s('M11 8a5 5 0 1 1 0-5', '#85859a', 2.5), s('M13 12l11-9', '#8e8a7c', 4), f('M2 16l10-3 7 3 5 2v7H4z', '#8088a0', '#70788c'), s('M18 17q3-5 5 1', '#70788c', 2)],

    b1: [f('M9 3h8v4h-2v13l-2 3-2-3V7H9z', '#d8903a', '#4a4a9a', 1.5)],
    b2: [f('M9 3h8v4h-2v12h2v4H9v-4h2V7H9z', '#b88858', B, 1.5), s('M13 3v20', '#5a2a1a', 1)],
    b3: [s('M3 6h15v5H6v4h15v5h-9', '#3a62b8', 3), s('M3 6h15v5H6v4h15v5h-9', '#b8cce8', 1)],
    b4: [f('M1 7h24v13q-12-12-24 0z', '#d8d4d4', B, 1.5), s('M6 16q7-7 14 0', R, 1)],
    b5: [s('M1 21h8L13 6l10 2', '#5a90a8', 4), s('M1 21h8L13 6l10 2', '#b8dce8', 2), s('M11 7v11', R, 1.5)],
    b6: [f('M9 2h8v5h3v5h-3v8l-2 3h-4l-2-3v-8H6V7h3z', '#c4ccf6', B, 1.5), s('M6 10h14M9 16h8', B, 1), s('M13 2v22', R, 1)],
    b7: [f(c(13, 10, 8), '#f4d848', '#7a6a18', 1.5), f(c(13, 10, 4), '#f8f0b0', '#7a3a18'), s('M2 10h22M13 1v18', R, 1), f('M5 21h16v2H5z', '#b8c4f4', B)],
    b8: [f('M7 21V9q6-12 12 0v12z', '#f0f4ff', B, 1.5), f(r(4, 20, 18, 4), '#38b8e0', B), f(r(11, 8, 4, 12), '#8a7a38')],
    b9: [f('M2 7h7v14H2zM17 7h7v14h-7z', W, B, 1.5), s('M9 18l8-8', '#7a3a28', 2.5), s('M5 2v20M20 2v20', R, 1)],
    b10: [f('M9 3h8v4h-2v12h2v4H9v-4h2V7H9z', '#e8c0e8', B, 1.5), s('M13 3v20', R, 1)],
    b11: [f('M4 13h18l-2 10H6z', W, B, 1.5), s('M1 12h24', B, 3), f('M4 3h18l-6 5v7h-6V8z', '#1a3a3a', '#0a5a4a'), s('M13 15v9', R)],
    b12: [f('M2 3h22l-4 20H6z', W, B, 1.5), f(r(8, 3, 10, 6), '#28b088', '#185a58'), s('M13 2v22', R, 1)],
    s1: bolt('#e8dcf4', B),
    s2: bolt('#8ad0d0', '#3a8aa8'),
    s3: bolt('#30b8e8', '#2038a8'),
    s4: bolt('#20b090', '#2868a8'),
    s5: [f('M6 3h14v5h-3v9l-2 1v5h-4v-5l-2-1V8H6z', W, B, 1.5), s('M13 2v22M6 8h14', R, 1)],
    s6: [f('M5 3h16l-5 5v15h-6V8z', '#e8c870', '#5a5a9a', 1.5), s('M13 3v21', '#b85a28', 1)],
    s7: [f(r(5, 4, 16, 19), W, B, 1.5), f(r(9, 3, 8, 7), '#28b070', '#186848'), s('M13 2v22', R, 1)],
    s8: [f('M6 7l3-4h8l3 4v16H6z', W, B, 1.5), s('M9 9h8M9 12h8M9 15h8M9 18h8M9 21h8', '#5a3a8a', 1), s('M13 2v22', R, 1)],
    s9: [f('M7 3h12v15l-3 1v4h-5v-4l-4-1z', W, '#6a68d8', 1.5), s('M13 2v22', R, 1)],
    s10: [f('M3 3h20v8h-4v5H7v-5H3z', '#38a840', '#7a4a18', 1.5), f('M9 4h8v6h-2v12l-2 2-2-2V10H9z', W, B), s('M13 2v22', R, 1)],
    s11: [f('M7 3h12v15l-3 1v4h-5v-4l-4-1z', '#f0964a', '#5868c8', 1.5), f(r(11, 19, 5, 4), '#6a7a3a')],
    m1: [s('M3 15L14 4', R, 2.5), s('M8 23l13-13', K, 2.5)],
    m2: [s('M3 22L19 6', R, 2.5), f(c(3, 22, 2) + c(20, 5, 2), '#2028b8')],
    m3: [s('M9 6q9-4 12 4t-6 12q-6 1-10-4', R, 2), f('M6 5l7-4v8z', R), f(c(12, 13, 1), B)],
    m4: [s('M5 6v11l10 7M5 17l8-4', '#7a38a8', 1.5), ...lock(14, 3, '#7a38a8')],
    m5: quad('#f8f8ff', '#3a4a98'),
    m6: quad('#7a3a28', '#2a2a78'),
    m7: [s('M8 18V6M5 9l3-4 3 4', '#8a4a98', 1.5), s(r(12, 13, 9, 6), R, 1.5)],
    m8: [s('M2 16L12 6', R, 2.5), s('M6 24l13-13', K, 2.5), f(r(16, 2, 7, 7), '#f4f4ff', B, 1.5)],
    m9: [s('M3 23L16 10', R, 2.5), f(c(3, 23, 2), B), f(r(10, 2, 7, 6), W, B, 1.5), s('M17 7h5', B, 2)],
    m10: [s('M9 6q-7 3-5 11t10 6q8-2 8-9T14 5', R, 2), f('M10 4l7-3v7z', R), f(r(9, 9, 7, 9), W, B, 1.5), dot(13, 13, B)],
    m11: [s('M4 6v13l10 5M4 19l9-5', R, 1.5), ...lock(13, 3, B), f(r(16, 17, 9, 7), W, B, 1.5)],
    m12: [s(r(11, 2, 4, 3) + r(11, 21, 4, 3) + r(2, 11, 3, 4) + r(21, 11, 3, 4) + r(5, 5, 3, 3) + r(18, 5, 3, 3) + r(5, 18, 3, 3) + r(18, 18, 3, 3), '#4a58c8', 1), s('M13 9v8M9 13h8', '#e8803a', 1)],
    m13: quad('#18b048', '#184a38'),
    m14: [s('M8 18V6M5 9l3-4 3 4', K, 1.5), f(r(13, 12, 9, 7), W, B, 1.5)],
    m15: [s('M11 5q11-2 11 8t-9 10q-6 0-9-4', R, 2), f(r(3, 2, 8, 7), W, B, 1.5), dot(12, 13, B)],
    m16: [f(r(3, 5, 9, 6), W, B, 1.5), s('M12 11l8 7', '#38a048', 1), f(c(20, 19, 1), R)],

    p1: [s('M2 7l6-5h16v16l-6 6H2zM2 7h16v17M18 7l6-5', '#555', 1.5), f('M6 10l7-3 6 3v8l-6 4-7-4z', '#e02420', '#8a1010'), f('M6 10l7-3 6 3-6 3z', '#ff7a70')],
    p2: [f('M1 12l5-5h19v10l-5 6H1z', '#68b0e8', '#3a72b0'), f('M1 12l5-5h19l-5 5z', '#c8e8fa'), s('M13 1v22', R, 1), s('M7 3h12', '#d06828', 1.5), f('M5 3l5-3v6zM21 3l-5-3v6z', '#d06828')],
    p3: [f('M1 14l7-3 16-2v4l-9 2v7l-5 2v-7l-9 1z', '#b0d0f6', '#4a78c0'), f('M10 4l6-1v15l-6 2z', '#ffb038', '#a86a10')],
    p4: [f('M2 6l5-4h17v18l-5 4H2z', '#f4f0ee', '#6a6464', 1), s('M2 6h17v18M19 6l5-4', '#6a6464', 1), f(r(6, 10, 8, 10), '#e4c4bc', '#9a3a2a', 1.5), s('M6 20l4-4v-6M10 16h4', '#9a3a2a', 1)],
    p5: [f('M2 9l11-7 11 6-11 8z', '#f8483a', '#c02018'), f('M2 9l11 7v9L2 17z', '#c84a8a'), f('M13 16l11-8v9l-11 8z', '#f0a838'), s('M2 15l11 8 11-8', '#4a68d8', 2)],
    p6: [f('M8 2l17 5q-5 7-6 17-8-5-18-3 7-8 7-19z', '#f4eaf8', '#a83a50', 1), f('M10 7l9 3-4 10-9-1z', '#8a58d0'), s('M13 8l-4 11M16 9l-4 11M9 12l9 2M8 16l9 1', '#e8d8ff', 1)],
    p7: [f('M2 7q12 0 23-4-5 9-5 21-7-6-16-5-1-6-2-12z', '#ff9a18', '#a85808')],
    p8: [f('M1 15l12-7 12 5v4l-12 7-12-5z', '#a0c4f0', '#3a62b8'), f('M1 15l12-7 12 5-12 6z', '#eef4ff', '#3a62b8'), s('M2 7l20 11', R, 1)],
    p9: [f('M2 5l10-4 12 3-3 5-12 1z', '#f4c848', '#b07818'), f('M4 12l8-3 8 3-8 4z', '#e8782a'), f('M2 19l10-4 11 3-8 6-13-1z', '#f4c848', '#b07818'), s('M13 17l4 4 7-9', '#30a838', 3)],
    p10: [s(e(9, 9, 5, 7), '#a89c28', 3), s(e(10, 17, 5, 7), '#c8bc38', 3), s('M13 7l4 4 8-9', '#38a840', 3)],
    p11: [f(r(1, 11, 13, 13), '#f4f4f4', K, 1.5), f(r(9, 7, 13, 13), 'none', '#333', 1.5), s(r(9, 11, 5, 9), R, 1.5), s('M13 5l4 5 7-9', '#38b040', 3)],
    p12: [s('M2 7l5-5h17v17l-5 5H2zM2 7h17v17M19 7l5-5', '#9a9a90', 1.5), f('M6 9l4-3h11v11l-4 4H6z', '#f4d848'), f('M6 9l4-3h11l-4 3z', '#fff09a')],
    p13: [f('M3 13h20v10H3z', '#d8d4c8', '#4a4438', 1.5), f('M3 3h20v5h-3l-3 9H9L6 8H3z', '#f0a424', '#8a5a10', 1)],
    p14: [f('M2 3h9v15l-4 3-5-3z', '#78a8f0', '#3058a8'), f('M4 3h3v17l-3-2z', '#c8dcfc'), f('M14 9h10v13l-4 3-6-3z', '#78a8f0', '#3058a8'), f('M14 9h10v4H14z', '#f0a848'), s('M7 18l6 3', R, 2)],
    p15: [f('M2 5l6-4 6 3v8l-6 3-6-3z', '#7aacf0', '#3058a8'), f('M2 5l6-4 6 3-6 3z', '#d0e4fc'), f('M14 18l4 4 7-7-1 8-6 2-5-2z', '#ffa838', '#c86a10'), s('M8 11l6 7', R, 2.5)],
    p16: [f('M2 3l11-2v19l-11 3z', '#88b8b0', '#4a7a7a'), s('M5 7h5M5 11h5M5 15h5', '#d8f0e8'), f('M8 16l10-6 8 6-11 9z', '#b0c0d4', '#6a7a98'), s('M11 18l7 4M14 14l8 5', '#e8f0fa', 1)],
    q1: [f(e(13, 13, 11, 9), W, B, 1), f(c(13, 13, 6), '#181018'), f('M13 7v6H7a6 6 0 0 1 6-6zM13 19v-6h6a6 6 0 0 1-6 6z', '#f4eae6'), s('M13 2v22M1 13h24', R, 1)],
    q2: [f(r(0, 0, 26, 26), '#0c1468'), t('CAD', 3, 11, 11, '#d8e8e8', 'Liberation Mono'), s(c(13, 19, 4), '#c03040'), s('M6 19h14M13 13v13', '#30b890', 1)],
    q3: [f('M9 3h8v16h3v4H6v-4h3z', '#eef0ff', B, 1), t('?', 9, 16, 13, R)],
    q4: [f(e(13, 13, 11, 9), W, B, 1), f('M6 9l7 2 7-2v8l-7-2-7 2z', '#18184a'), s('M13 2v22M1 13h24M5 8h16M5 18h16', '#5a60d0', 1), s('M13 2v22', R, 1)],
    q5: [f(e(13, 13, 11, 9), W, B, 1), s(c(13, 13, 6), '#30a058', 3), f(c(13, 13, 4), '#181018'), f('M13 9v4H9a4 4 0 0 1 4-4zM13 17v-4h4a4 4 0 0 1-4 4z', W), s('M13 2v22M1 13h24', R, 1)],
    q6: [f(e(13, 13, 11, 10), '#eee8fa', '#2a2a98'), s('M13 4a9 9 0 0 1 9 9M13 22a9 9 0 0 1-9-9', '#5838c0', 4), f(c(13, 13, 6), '#e8d048', '#7a4a98'), f(c(13, 13, 4), '#2a1a18'), f('M13 9v4H9a4 4 0 0 1 4-4zM13 17v-4h4a4 4 0 0 1-4 4z', W), s('M13 2v22M1 13h24', R, 1)],
    q7: [f('M4 3h11v13h3v4H2v-4h3z', '#1a1a90', '#101058'), s('M10 3v23', OR, 2.5), s('M1 9h16', '#28a878', 1.5), t('?', 17, 17, 17, R)],
    q8: [f('M8 3h8v15h3v5H5v-5h3z', '#d8ecf4', B, 1), s('M2 9h20', '#c8c848', 1.5), s('M12 3v20', '#38b098'), t('?', 18, 15, 12, '#40c8e0')],
    q9: [f('M8 3h6v14h10v4H14v2H4v-5h4z', '#e8ebfc', B, 1), s('M11 2v22', R, 1)],
    q10: [f('M10 2h6v8h3v3H7v-3h3zM7 15h12v3h-3v6h-6v-6H7z', '#b0bcf4', B, 1), s('M13 1v24', R, 1)],
    q11: [f('M9 3h11v20H5v-8h5z', W, '#4a58c8', 1), s('M9 3l5 6-5 4h5v8', '#5a60d0', 1), s('M9 3l5 6', R, 1)],
    q12: [f('M6 4h14l-4 9 1 5h3v5H6v-5h3l1-5z', '#e8ecff', B, 1), s('M6 18h14M8 8h10', B, 1), s('M13 2v22', R, 1)],
    q13: [f('M9 3h8v15h4v5H5v-5h4z', '#f4f5ff', B, 1), s('M1 7q5-4 12 0t12-2', R, 1)],
    q14: [f(r(2, 3, 22, 20), '#f48a3a', '#4a3a98', 1), f('M8 23v-9l3-7h4l3 7v9z', '#f8ece4', '#5a4a48'), s('M13 4v19', R, 1)],
    q15: [f('M10 5q3-4 6 0v16q-3 4-6 0z', W, B, 1.5), s('M13 2v22', R, 1)],
    q16: [f('M10 5q3-4 6 0v16q-3 4-6 0z', '#c89a30', '#4a4898', 1.5), s('M13 3v20', '#38a048')],
    z1: [f('M3 7l9-4h11v14l-8 5H3z', '#f4f0ee', '#8a7a7a'), f('M6 10l8-3 6 3v8l-7 4-7-4z', '#d82420', '#7a1010'), f('M6 10l8-3 6 3-7 3z', '#f87068')],
    z2: [f('M2 23V7q5-7 8 2h6q3-9 8-2v16z', W, B, 1), f('M2 9q1-7 5-6 5 1 3 7-4 3-8-1zM24 9q-1-7-5-6-5 1-3 7 4 3 8-1z', '#e02828'), s('M13 2v22', R, 1)],
    z3: [
        f(r(3, 3, 5, 5), '#e83020'), f(r(8, 3, 5, 5), '#f8f030'), f(r(13, 3, 5, 5), '#38c040'), f(r(18, 3, 5, 5), '#2838d8'),
        f(r(3, 8, 5, 5), '#28a838'), f(r(8, 8, 5, 5), '#e8e8e8'), f(r(13, 8, 5, 5), '#38d8e8'), f(r(18, 8, 5, 5), '#e838c8'),
        f(r(3, 13, 5, 5), '#111'), f(r(8, 13, 5, 5), '#30c8d8'), f(r(13, 13, 5, 5), '#2868e8'), f(r(18, 13, 5, 5), '#f8f8f8'),
        f(r(3, 18, 5, 5), '#f09030'), f(r(8, 18, 5, 5), '#288838'), f(r(13, 18, 5, 5), '#7838c8'), f(r(18, 18, 5, 5), '#101058'),
    ],
    z4: [f('M3 5q3-4 6 0h8q3-4 6 0v5q-3 3 0 6v5q-3 4-6 0H9q-3 4-6 0v-5q3-3 0-6z', W, B, 1), s('M13 2v22M2 13h22', R, 1)],
    z5: [s('M4 6l19 16', B, 1.5)],
    z6: [s(c(13, 13, 10), B, 1), s('M13 1v24M1 13h24', '#e0604e', 1)],
    z7: [s('M3 5l20 17M2 9l18 15', R, 1), s('M9 3l15 12M1 14l14 11', '#4a68c8', 1)],
    z8: [f(r(3, 5, 20, 16), W, B, 1.5), s('M13 2v22M2 13h22', R, 1)],
    z9: [s('M3 8h15v15H3zM3 8l5-4h15v15l-5 4M18 8l5-4M8 11v9M8 20h8', '#e04838', 1)],
};

const Icon = ({ name, className = 'size-[26px]' }: { name: string; className?: string }) => (
    <svg viewBox="0 0 26 26" className={clsx('shrink-0 overflow-visible', className)} aria-hidden="true">
        {icons[name].map((shape, i) =>
            shape.t ? (
                <text key={i} x={shape.x} y={shape.y} fontSize={shape.size} fill={shape.fill} fontFamily={`${shape.font}, sans-serif`} fontWeight={700}>
                    {shape.t}
                </text>
            ) : (
                <path key={i} d={shape.d} fill={shape.fill} stroke={shape.stroke} strokeWidth={shape.w} />
            )
        )}
    </svg>
);

const Caret = ({ className }: { className?: string }) => (
    <svg viewBox="0 0 6 4" className={clsx('h-1 w-1.5', className)} aria-hidden="true">
        <path d="M0 0h6L3 4z" fill="#000" />
    </svg>
);

const Grip = () => <span className="my-1.5 w-[9px] shrink-0 bg-[radial-gradient(circle,#9a9a9a_1px,transparent_1px)] bg-[length:9px_4px]" />;

const Separator = () => <span className="my-px w-[7px] shrink-0 bg-[linear-gradient(90deg,transparent_3px,#bcbcbc_3px,#bcbcbc_4px,#efefef_4px,#efefef_5px,transparent_5px)]" />;

const Overflow = ({ more }: { more?: boolean }) => (
    <button aria-label="工具条选项" className="flex w-[15px] shrink-0 flex-col items-center justify-between py-1.5">
        <svg viewBox="0 0 8 6" className={clsx('h-1.5 w-2', !more && 'invisible')} aria-hidden="true">
            <path d="M0 0l3 3-3 3M4 0l3 3-3 3" fill="none" stroke="#000" strokeWidth="1.5" />
        </svg>
        <Caret />
    </button>
);

const labels: Record<string, string> = { start: '开始', finder: '命令查找器' };

interface BandProps {
    items: string;
    tiled?: boolean;
    more?: boolean;
    open?: boolean;
    className?: string;
}

// items: icon names separated by blanks, "v" is a drop-down arrow and "|" a separator
const Band = ({ items, tiled, more, open, className }: BandProps) => (
    <div role="toolbar" className={clsx('flex shrink-0 items-stretch', !open && 'border-r border-[#f4f4f4] shadow-[1px_0_0_#b8b8b8]', className)}>
        <Grip />
        {items.split(' ').map((item, i) => {
            if (item === '|')
                return <Separator key={i} />;
            if (item === 'v')
                return (
                    <button key={i} aria-label="下拉" className="flex w-[13px] shrink-0 items-center justify-center">
                        <Caret />
                    </button>
                );
            return (
                <button key={i} aria-label={labels[item] ?? item} className={clsx('flex shrink-0 items-center', item === 'finder' && 'pr-[3px]')}>
                    <span className="flex w-[33px] justify-center">
                        <span className={clsx('flex', tiled && 'bg-[#c3c3c3]')}>
                            <Icon name={item} />
                        </span>
                    </span>
                    {labels[item] && <span className="text-[13px] text-black">{labels[item]}</span>}
                </button>
            );
        })}
        {!open && <Overflow more={more} />}
    </div>
);

const menus = ['文件(F)', '编辑(E)', '视图(V)', '插入(S)', '格式(R)', '工具(T)', '装配(A)', '信息(I)', '分析(L)', '首选项(P)', '窗口(O)', 'GC 工具箱', '燕秀UG模具6.', '帮助(H)', 'HB_MOULD M6.6'];

// latin runs are set in a narrower monospace face than the chinese ones
const MenuLabel = ({ text }: { text: string }) => (
    <>
        {text.split(/([\x20-\x7e]+)/).filter(Boolean).map((run, i) => {
            if (!/[\x20-\x7e]/.test(run))
                return <span key={i} className="text-[13px]">{run}</span>;
            const at = run.startsWith('(') ? 1 : run.indexOf('M6');
            return (
                <span key={i} className="whitespace-pre font-['Liberation_Mono','Noto_Sans_CJK_SC',monospace] text-[11px]">
                    {at < 0 ? run : <Fragment>{run.slice(0, at)}<u className="underline-offset-2">{run[at]}</u>{run.slice(at + 1)}</Fragment>}
                </span>
            );
        })}
    </>
);

const FilterSelect = ({ label, options, className }: { label: string; options: string[]; className: string }) => {
    const [value, setValue] = useState(options[0]);
    return (
        <label className={clsx('relative flex h-[18px] shrink-0', className)}>
            <span className="sr-only">{label}</span>
            <select
                value={value}
                onChange={(ev) => setValue(ev.target.value)}
                className="h-full w-full appearance-none rounded bg-white p-0 pl-0.5 text-[13px] leading-[18px] text-black ring-1 ring-[#56606c] ring-inset"
            >
                {options.map((option) => <option key={option}>{option}</option>)}
            </select>
            <span className="pointer-events-none absolute inset-y-px right-px flex w-[18px] items-center justify-center rounded-r bg-linear-to-b from-[#a8cdf4] to-[#4f8fd4]">
                <svg viewBox="0 0 10 7" className="h-[7px] w-2.5" aria-hidden="true"><path d="M0 0h10L5 7z" fill="#0c1420" /></svg>
            </span>
        </label>
    );
};

const SnapBar = () => (
    <div className="flex h-[29px] items-center bg-linear-to-b from-[#c2c2c2] to-[#dadada] pl-[7px] shadow-[inset_0_1px_0_#a4a4a4]">
        <FilterSelect label="类型过滤器" options={['没有选择过滤器']} className="w-[118px]" />
        <FilterSelect label="选择范围" options={['整个装配']} className="ml-2 w-[126px]" />
        <div className="ml-1 flex h-full items-center">
            {'fInt | fBack fSnap v fDes fHand | fRect v | fHouse fCube | fEnds* fNodes fEnd* fMid* fTan fInter fCenter* fQuad fPoint* fOn* fFace | fGrid'.split(' ').map((item, i) => {
                if (item === '|')
                    return <span key={i} className="mx-0.5 h-6 w-0.5 border-l border-[#b4b4b4] bg-[#ececec]" />;
                if (item === 'v')
                    return <button key={i} aria-label="下拉" className="flex w-2.5 justify-center"><Caret /></button>;
                const on = item.endsWith('*');
                const name = item.replace('*', '');
                return (
                    <button key={i} aria-label={name} aria-pressed={on} className={clsx('flex h-6 w-[25px] items-center justify-center', on && 'rounded-sm border border-[#4a4a4a] bg-white')}>
                        <Icon name={name} className="size-[18px]" />
                    </button>
                );
            })}
        </div>
        <button aria-label="工具条选项" className="mr-1.5 ml-auto pt-4"><Caret /></button>
    </div>
);

const StatusBar = () => (
    <div className="flex h-[23px] border-t border-[#f2f2f2] border-b border-b-[#a0a0a0] bg-[#dadada]">
        <div className="flex-[707] border-r border-[#f6f6f6] shadow-[1px_0_0_#b4b4b4]" />
        <div className="flex-[707] border-r border-[#f6f6f6] shadow-[1px_0_0_#b4b4b4]" />
        <div className="w-5 border-r border-[#f6f6f6]" />
        <div className="w-10 border-r border-[#f6f6f6]" />
        <div className="flex w-[46px] items-center gap-[6px] pl-[3px]">
            <Icon name="flag" className="size-[17px]" />
            <Icon name="window" className="size-[14px]" />
        </div>
    </div>
);

const tabGroups = [['assyNav', 'constraint', 'partNav', 'library'], ['webInfo'], ['browser'], ['clock', 'roles', 'rainbow', 'wizard2', 'people', 'gallery']];

const ResourceBar = () => (
    <nav className="flex w-[46px] shrink-0 border-t border-[#f0f0f0] bg-linear-to-r from-[#aeaeae] from-78% to-[#eeeeee] to-78%">
        <div className="flex w-full flex-col gap-[15px] pt-[19px]">
            {tabGroups.map((group) => (
                <div key={group[0]} className="flex flex-col gap-[3px]">
                    {group.map((name) => (
                        <button
                            key={name}
                            aria-label={name}
                            className={clsx(
                                'flex items-center rounded-l border border-r-0',
                                name === 'browser' ? 'ml-1 h-[46px] border-[#8a8a8a] bg-[#eeeeee] pl-1.5' : 'mr-2.5 ml-[7px] h-[42px] border-[#6e6e6e] bg-linear-to-r from-[#e2e2e2] to-[#c8c8c8] pl-0.5'
                            )}
                        >
                            <Icon name={name} className="size-6" />
                        </button>
                    ))}
                </div>
            ))}
        </div>
    </nav>
);

const SketchBar = () => (
    <div role="toolbar" aria-label="草图" className="flex w-12 shrink-0 flex-col border-r border-[#f0f0f0] bg-linear-to-r from-[#e2e2e2] to-[#cfcfcf]">
        <span className="mx-1.5 my-0.5 h-[5px] bg-[radial-gradient(circle,#9a9a9a_1px,transparent_1px)] bg-[length:4px_5px]" />
        {'sketch flag # profile line arc circle fillet chamf2 rect spline plus offGray+ | qTrim qExt qCorner | rapid+ | geoCon symm autoCon+ | attach reattach'.split(' ').map((item, i) => {
            if (item === '|')
                return <span key={i} className="my-[3px] h-0.5 border-t border-[#b8b8b8] bg-[#f4f4f4]" />;
            if (item === '#')
                return (
                    <button key={i} disabled className="flex h-14 items-center justify-center self-stretch">
                        <span className="text-[13px] leading-4 text-[#8c8c8c] [writing-mode:vertical-rl] [text-orientation:sideways]">完成草图</span>
                    </button>
                );
            const name = item.replace('+', '');
            return (
                <button key={i} aria-label={name} className="flex h-[33px] items-center justify-center">
                    <Icon name={name} className={name === 'flag' ? 'size-[26px]' : 'size-6'} />
                    {item.endsWith('+') && <Caret className="ml-2" />}
                </button>
            );
        })}
        <div className="mt-auto flex items-center justify-between px-1.5 pb-1">
            <svg viewBox="0 0 4 6" className="h-1.5 w-1" aria-hidden="true"><path d="M4 0v6L0 3z" fill="#000" /></svg>
            <svg viewBox="0 0 6 8" className="h-2 w-1.5" aria-hidden="true"><path d="M0 0l3 3 3-3M0 4l3 3 3-3" fill="none" stroke="#000" strokeWidth="1.5" /></svg>
        </div>
    </div>
);

// transparent blue stock over the brown base, with the rounded part inside
const Model = () => (
    <svg viewBox="0 0 1568 1568" className="absolute top-[198px] left-[276px] size-[530px] overflow-visible" role="img" aria-label="模型">
        <defs>
            <filter id="soft" x="-10%" y="-10%" width="120%" height="120%"><feGaussianBlur stdDeviation="7" /></filter>
            <filter id="round" x="-10%" y="-10%" width="120%" height="120%"><feGaussianBlur stdDeviation="5" /></filter>
            <linearGradient id="baseLeft" x1="0" y1="0" x2="1" y2="1"><stop offset="0" stopColor="#6f451c" /><stop offset="1" stopColor="#6a421e" /></linearGradient>
            <linearGradient id="side" x1="0" y1="0" x2="0" y2="1"><stop offset="0" stopColor="#138fae" /><stop offset=".45" stopColor="#0a6d8c" /><stop offset="1" stopColor="#01506a" /></linearGradient>
            <linearGradient id="front" x1="0" y1="0" x2="0" y2="1"><stop offset="0" stopColor="#00868c" /><stop offset=".2" stopColor="#00606f" /><stop offset=".3" stopColor="#004f68" /><stop offset="1" stopColor="#004b63" /></linearGradient>
            <clipPath id="floor"><path d="M68 682L1329 547 1496 1166 238 1302z" /></clipPath>
            <clipPath id="part"><path d="M420 615q4-26 30-30L1070 520q22 0 32 24L1157 760V1000q0 16-22 20L500 1086q-24 0-32-18L409 852z" /></clipPath>
        </defs>
        <path d="M68 682L238 1302 236 1528 65 908z" fill="url(#baseLeft)" />
        <path d="M238 1302L1496 1166 1498 1390 236 1528z" fill="#53351b" />
        <path d="M72 200L1333 65 1502 683 1496 1166 238 1302 68 682z" fill="#2f76b0" />
        <path d="M72 200L1333 65 1502 683 241 818z" fill="#29a3da" />
        <path d="M1333 65L1502 683 1367 697 1329 547z" fill="#29a6e4" />
        <path d="M68 682L202 668 1329 547 1496 1166 238 1302z" fill="#2d7896" />
        <path d="M68 682L202 668 241 818V1302z" fill="#2b80aa" />
        <path d="M202 668L1329 547 1367 697 241 818z" fill="#27abd0" />
        <g clipPath="url(#floor)">
            <g filter="url(#soft)" fill="#6a6b68">
                <path d="M100 680L210 668 244 808 130 822z" />
                <path d="M178 1000L390 978 422 1105 212 1130z" />
                <path d="M475 1130L690 1108 714 1232 502 1255z" />
                <path d="M1160 732L1355 708 1388 850 1178 868z" />
                <path d="M1232 1046L1446 1026 1472 1150 1258 1176z" />
                <path d="M1150 880q12 90 45 150l-45-10z" />
                <path d="M490 1086L830 1052Q690 1100 600 1092z" />
                <path d="M380 820l25-4 10 120q-22-40-35-116z" opacity=".6" />
            </g>
            <path d="M208 674L308 664 336 800 244 810z" fill="#63a39b" filter="url(#soft)" />
        </g>
        <g fill="none" stroke="#1a4a66" strokeWidth="3">
            <path d="M1333 65L1329 547 1496 1166M68 682L1329 547" opacity=".7" />
        </g>
        <g clipPath="url(#part)">
            <path d="M400 510H1170V1100H400z" fill="url(#front)" />
            <path d="M510 830L1157 760V1100H480z" fill="#004e67" filter="url(#round)" />
            <path d="M400 580L450 580 512 800 500 1100H460L400 860z" fill="url(#side)" />
            <path d="M480 830q22-30 60-26L516 1090H460z" fill="#00586f" filter="url(#round)" />
            <path d="M448 580L1080 515 1135 740 510 808z" fill="#02b5bd" />
            <path d="M1070 515L1110 520 1165 745 1130 742z" fill="#02a5a6" filter="url(#round)" />
            <path d="M425 585L455 590 512 805 490 815z" fill="#12a4c4" filter="url(#round)" />
            <path d="M508 790L1135 722 1165 780 505 850z" fill="#047f88" filter="url(#round)" />
            <path d="M1132 760h30v270h-30z" fill="#00616f" filter="url(#round)" />
            <g filter="url(#soft)">
                <path d="M682 580L850 560 868 646 702 664z" fill="#04b67a" />
                <path d="M540 860L686 848 692 944 528 950z" fill="#034a44" />
                <path d="M925 945L1090 925 1100 1020 925 1035z" fill="#034a44" />
                <path d="M452 800l20 10v80l-20-20z" fill="#0a5a58" />
                <path d="M940 570L1060 560 1070 610 950 620z" fill="#04b5b2" />
            </g>
            <g fill="none" stroke="#05565e" strokeWidth="2">
                <path d="M425 590L1100 520M450 585L512 808V1086M1070 520L1132 740V1020M505 808L1157 738M510 838L1157 765" opacity=".7" />
            </g>
        </g>
        <g fill="none" stroke="#17364c" strokeWidth="3">
            <path d="M72 200L1333 65 1502 683 241 818zM72 200L68 682 238 1302 1496 1166 1502 683M241 818L238 1302" />
            <path d="M68 682L65 908 236 1528 1498 1390 1496 1166M238 1302L236 1528" stroke="#2c2a24" />
        </g>
        <path d="M784 535q10 65-1 127q-11-62 1-127z" fill="#5f5aa8" />
        <path d="M604 691q30-14 76-14l88 0-88 14z" fill="#f0908a" />
        <path d="M604 691q40-4 76-6l88-8" fill="none" stroke="#ffd8d0" strokeWidth="3" />
        <path d="M784 678q32 44 33 108q-22-30-33-108z" fill="#b8e29a" />
        <g fontFamily="Open Sans, Noto Sans, sans-serif" fontSize="42">
            <text x="728" y="534" fill="#1450e0">ZC</text>
            <text x="604" y="738" fill="#a8635a">XC</text>
            <text x="764" y="822" fill="#18983c">YC</text>
        </g>
    </svg>
);

const Triad = () => (
    <svg viewBox="0 -8 76 96" className="absolute bottom-[24px] left-[12px] h-24 w-[76px]" aria-hidden="true">
        <path d="M27 27l24-3 5 32-1 7-23 2-5-25z" fill="#cfcfd1" stroke="#a6a6a6" />
        <path d="M27 27l5 7h22M32 34v31" fill="none" stroke="#b6b6b6" />
        <path d="M53 44V22" stroke="#7f98d8" strokeWidth="2" />
        <path d="M53 11l4 11h-7z" fill="#0f2fa4" />
        <path d="M52 46L24 48" stroke="#e08a84" strokeWidth="2" />
        <path d="M11 49l15-4v7z" fill="#d0322a" />
        <path d="M53 46l5 15" stroke="#8ccc94" strokeWidth="2" />
        <path d="M55 61l7-1-2 12z" fill="#168a34" />
        <g fontFamily="Open Sans, Noto Sans, sans-serif" fontSize="12">
            <text x="50" y="10" fill="#3a5ae0">Z</text>
            <text x="1" y="54" fill="#d4423a">X</text>
            <text x="58" y="79" fill="#4aa85a">Y</text>
        </g>
    </svg>
);

const App = () => {
    return (
        <div className="flex min-h-screen flex-col bg-black px-[200px] pt-1 pb-0.5 font-['Liberation_Sans','Noto_Sans_CJK_SC',sans-serif] text-black">
            <div className="flex flex-1 flex-col overflow-hidden bg-[#dadada]">
                <header className="flex h-[26px] items-center border-b border-[#c6c6c6] bg-[#e4e4e4]">
                    <Grip />
                    <Icon name="app" className="mr-1.5 size-[17px]" />
                    <nav className="flex gap-[13px]">
                        {menus.map((menu) => (
                            <button key={menu} className="flex shrink-0 items-center leading-4">
                                <MenuLabel text={menu} />
                            </button>
                        ))}
                    </nav>
                    <div className="mr-1.5 ml-auto flex gap-[3px]">
                        {['M4 13h7', 'M3 8h7v5H3zM6 7V4h7v6h-3', 'M4 4l8 8M12 4l-8 8'].map((d, i) => (
                            <button key={d} aria-label={['最小化', '还原', '关闭'][i]} className="flex size-[18px] items-center justify-center rounded border border-[#8a8a8a] bg-[#f4f4f4]">
                                <svg viewBox="0 0 16 16" className="size-4" aria-hidden="true"><path d={d} fill="none" stroke="#5c5c5c" strokeWidth="2" /></svg>
                            </button>
                        ))}
                    </div>
                </header>

                <div className="flex h-9 border-t border-[#f4f4f4] bg-linear-to-b from-[#e0e0e0] to-[#d0d0d0]">
                    <Band items="start v new open save | cut copy paste | undo redo | finder wizard v | updown assem | info" />
                    <Band items="fit v shade v sphere2 v clipA clipB v blank v | sectA sectB" />
                    <Band open items="layers csys v drag | handA handB | show v | measure v ruler dimX cone cubeRule curve trap" />
                    <div className="ml-auto flex"><Overflow more /></div>
                </div>
                <div className="flex h-[37px] border-t border-[#f4f4f4] bg-linear-to-b from-[#dedede] to-[#cfcfcf]">
                    <Band className="pr-[3px]" items="datum v extrude revolve hole emboss rib thread | cylinder sphere boss pattern instance unite v split trimBody swept cornerO shell slab groove bend wrap sheetR | blend edgeA edgeB chamfer offsetF draft" />
                    <Band items="sMove v sCyl sReplace sRound v sDelete sCopy v sCopl v sDim v sShell sEdit" />
                    <div className="flex-1 bg-[#dcdcdc]" />
                </div>
                <div className="flex h-[37px] border-t border-[#f4f4f4] bg-linear-to-b from-[#dadada] to-[#cacaca]">
                    <Band tiled more items="box3 plane3 meas3 list3 radius level angle" />
                    <Band items="line arc rect spline text offset faceCurve bridge bridge2 project intersect combine" />
                    <Band more items="wrench trimC divide length" />
                    <Band items="ruled mesh1 mesh2 mesh3 mesh4 studio trimS surf v" />
                    <Band more items="morph" />
                    <Band open items="grid gridMove | mold1 mold2 mold3 mold4 mold5 mold6" />
                    <div className="ml-auto flex"><Overflow more /></div>
                </div>
                <SnapBar />
                <StatusBar />

                <main className="flex flex-1">
                    <ResourceBar />
                    <SketchBar />
                    <section className="relative flex-1 overflow-hidden bg-[linear-gradient(180deg,#b4b5b7_0%,#c6c7c9_25%,#d8d9db_50%,#e5e7e8_75%,#e8eaeb_100%)]">
                        <Model />
                        <Triad />
                    </section>
                </main>

                <footer>
                    <div className="flex h-[37px] border-t border-[#f8f8f8] bg-linear-to-b from-[#e4e4e4] to-[#d6d6d6]">
                        <Band tiled className="pr-px" items="b1 b2 b3 b4 b5 b6 b7 b8 b9 b10 b11 b12" />
                        <Band tiled className="pr-px" items="s1 s2 s3 s4 s5 s6 s7 s8 s9 s10 s11" />
                        <Band tiled items="m1 m2 m3 m4 m5 m6 m7 m8 m9 m10 m11 m12 m13 m14 m15 m16" />
                    </div>
                    <div className="flex h-9 border-t border-[#f4f4f4] bg-linear-to-b from-[#dcdcdc] to-[#d0d0d0] pl-2">
                        <Band items="p1 p2 p3 p4 p5 p6 p7 p8 p9 p10 p11 p12 | p13 p14 p15 p16" />
                        <Band tiled className="ml-4" items="q1 q2 q3 q4 q5 q6 q7 q8 q9 q10 q11 q12 q13 q14 q15 q16" />
                        <Band tiled className="ml-1.5" items="z1 z2 z3 z4 z5 z6 z7 z8 z9" />
                    </div>
                </footer>
            </div>
        </div>
    );
};

export default App;
